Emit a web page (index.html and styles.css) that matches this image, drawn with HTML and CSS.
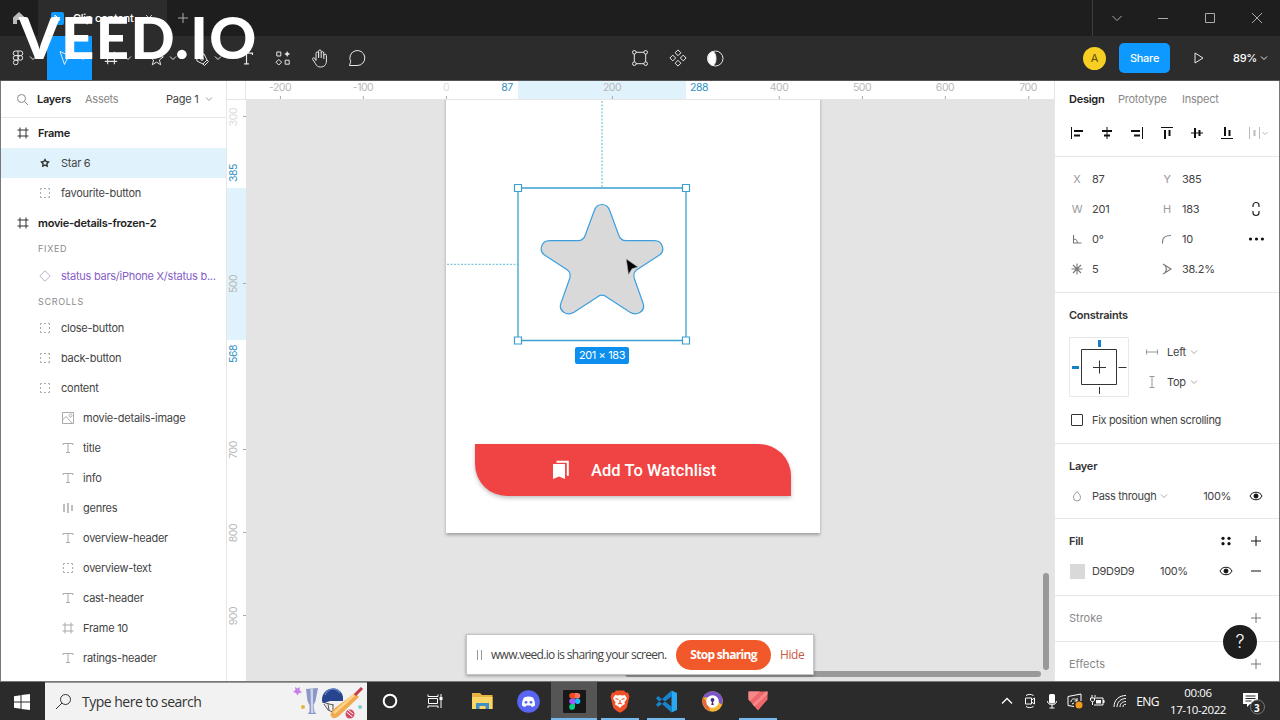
FILE: index.html
```html
<!DOCTYPE html>
<html lang="en">
  <head>
    <meta charset="UTF-8" />
    <meta name="viewport" content="width=device-width, initial-scale=1.0" />
    <title>Clip content</title>
    <link rel="stylesheet" href="styles.css">
  </head>
  <body>
    <!-- shared icons -->
    <svg class="sprite" xmlns="http://www.w3.org/2000/svg">
      <symbol id="chev" viewBox="0 0 8 8"><path d="M1 2.5l3 3 3-3" /></symbol>
      <symbol id="frame" viewBox="0 0 16 16"><path d="M5 2.5v11M11 2.5v11M2.5 5h11M2.5 11h11" /></symbol>
      <symbol id="group" viewBox="0 0 16 16"><path d="M3.500 5V3.500h1.500M7 3.500h2M11 3.500h1.500V5M12.500 7v2M12.500 11v1.500H11M9 12.500H7M5 12.500H3.500V11M3.500 9V7" /></symbol>
      <symbol id="text" viewBox="0 0 16 16"><path d="M3 5V3.500h10V5M8 3.500v9M6 12.500h4" /></symbol>
      <symbol id="plus" viewBox="0 0 16 16"><path d="M8 3v10M3 8h10" /></symbol>
      <symbol id="eye" viewBox="0 0 16 16">
        <path d="M2 8c2-5 10-5 12 0-2 5-10 5-12 0z" /><circle cx="8" cy="8" r="2" fill="currentColor" />
      </symbol>
    </svg>

    <div class="window">
      <div class="titlebar">
        <div class="home"><svg width="14" height="14" viewBox="0 0 14 14"><path d="M7 1L1 6.500V13h4V9h4v4h4V6.500z" fill="#bbb" stroke="none" /></svg></div>
        <div class="tab">
          <svg width="13" height="13" viewBox="0 0 13 13"><rect width="13" height="13" rx="2" fill="#0d99ff" stroke="none" /><path d="M4 10V3l5 5H6z" stroke="#fff" /></svg>
          <span class="tab-name">Clip content</span>
          <svg class="tab-close" width="8" height="8" viewBox="0 0 8 8"><path d="M1 1l6 6M7 1L1 7" /></svg>
        </div>
        <div class="new-tab"><svg width="16" height="16"><use href="#plus" /></svg></div>
        <div class="controls">
          <span><svg width="12" height="12" viewBox="0 0 12 12"><path d="M1.500 4L6 8.500 10.500 4" /></svg></span>
          <span><svg width="12" height="12" viewBox="0 0 12 12"><path d="M1 6.500h10" /></svg></span>
          <span><svg width="12" height="12" viewBox="0 0 12 12"><path d="M1.500 1.500h9v9h-9z" /></svg></span>
          <span><svg width="12" height="12" viewBox="0 0 12 12"><path d="M1 1l10 10M11 1L1 11" /></svg></span>
        </div>
      </div>

      <div class="toolbar">
        <div class="tools">
          <div class="tool tool-menu">
            <svg width="12" height="16" viewBox="0 0 12 16"><path d="M6 1H3.500a2.300 2.300 0 000 4.600H6zM6 1h2.500a2.300 2.300 0 010 4.600H6M6 5.600H3.500a2.300 2.300 0 000 4.600H6zM3.500 10.200A2.300 2.300 0 106 12.500v-2.300z" /><circle cx="8.400" cy="7.900" r="2.300" /></svg>
            <svg class="chev" width="8" height="8"><use href="#chev" /></svg>
          </div>
          <div class="tool active">
            <svg width="17" height="17" viewBox="0 0 17 17"><path d="M2 1.500l12.500 5.500-5.500 2-2.500 5.500z" /></svg>
            <svg class="chev" width="8" height="8"><use href="#chev" /></svg>
          </div>
          <div class="tool">
            <svg width="18" height="18" viewBox="0 0 16 16"><use href="#frame" /></svg>
            <svg class="chev" width="8" height="8"><use href="#chev" /></svg>
          </div>
          <div class="tool">
            <svg width="17" height="17" viewBox="0 0 17 17"><path d="M8.500 2l1.800 4.600 5 .3-3.900 3.100 1.300 4.800-4.200-2.700-4.200 2.700L5.600 10 1.700 6.900l5-.3z" /></svg>
            <svg class="chev" width="8" height="8"><use href="#chev" /></svg>
          </div>
          <div class="tool">
            <svg width="17" height="17" viewBox="0 0 17 17"><path d="M3 3l8 1 3 6-4 4-6-3zM3 3l5 5M14 10l1.500 1.500-4 4L10 14" /><circle cx="9" cy="9" r="1.300" /></svg>
            <svg class="chev" width="8" height="8"><use href="#chev" /></svg>
          </div>
          <div class="tool tool-small"><svg width="19" height="19"><use href="#text" /></svg></div>
          <div class="tool tool-small">
            <svg width="16" height="16" viewBox="0 0 16 16"><path d="M1.800 2h4v4h-4zM10.200 10.200h4v4h-4zM3.800 9.400L6.600 12.200 3.800 15 1 12.200zM12.200 1.500v5M9.700 4h5" /><path d="M12.200 2.500v3M10.700 4h3" stroke-width="2" /></svg>
          </div>
          <div class="tool tool-small">
            <svg width="18" height="19" viewBox="0 0 18 19"><path d="M5 11.500V4.300a1.300 1.300 0 012.600 0V9M7.600 8V2.300a1.300 1.300 0 012.600 0V9M10.200 4a1.300 1.300 0 012.600 0v6M12.800 6.500a1.300 1.300 0 012.600 0V12c0 4-2.500 6-5.700 6-3 0-4-1-5.200-3.300L1.700 10.400c-.7-1.400.9-2.300 1.800-1.200L5 11.500" /></svg>
          </div>
          <div class="tool tool-small">
            <svg width="18" height="18" viewBox="0 0 18 18"><path d="M1.500 16.500l1.200-4A7.500 7.500 0 119 16.500z" /></svg>
          </div>
        </div>
        <div class="tools tools-center">
          <div class="tool"><svg width="18" height="18" viewBox="0 0 18 18"><path d="M5 3.300h8M5 14.700h8M3.300 5v8M14.700 5v8" /><circle cx="3.300" cy="3.300" r="1.800" /><circle cx="14.700" cy="3.300" r="1.800" /><circle cx="3.300" cy="14.700" r="1.800" /><circle cx="14.700" cy="14.700" r="1.800" /></svg></div>
          <div class="tool"><svg width="18" height="18" viewBox="0 0 18 18"><path d="M9 .9l2.900 2.900L9 6.700 6.100 3.800zM9 11.300l2.900 2.900L9 17.100l-2.900-2.900zM3.800 6.100L6.700 9l-2.900 2.900L.9 9zM14.200 6.100L17.100 9l-2.900 2.900L11.300 9z" /></svg></div>
          <div class="tool"><svg width="17" height="17" viewBox="0 0 17 17"><path d="M6 1.300a7.500 7.500 0 000 14.400C10 13.500 10 3.500 6 1.300z" fill="#fff" /><circle cx="8.500" cy="8.500" r="7.500" /></svg></div>
        </div>
        <div class="toolbar-right">
          <div class="avatar">A</div>
          <div class="share">Share</div>
          <svg class="play" width="12" height="14" viewBox="0 0 12 14"><path d="M2 2l8 5-8 5z" /></svg>
          <span class="zoom">89%</span>
          <svg class="chev" width="8" height="8"><use href="#chev" /></svg>
        </div>
      </div>

      <div class="workspace">
        <div class="layers">
          <div class="layers-head">
            <svg width="13" height="13" viewBox="0 0 13 13"><circle cx="5.500" cy="5.500" r="4" /><path d="M8.500 8.500l3.500 3.500" /></svg>
            <b>Layers</b>
            <span class="assets">Assets</span>
            <span class="page">Page 1</span>
            <svg class="chev" width="8" height="8"><use href="#chev" /></svg>
          </div>
          <div class="layer top"><svg width="16" height="16"><use href="#frame" /></svg>Frame</div>
          <div class="layer sub selected"><svg class="dark" width="16" height="16" viewBox="0 0 16 16"><path d="M8 4.500l1.200 2 2.300.4-1.600 1.800.3 2.400L8 10.100l-2.200 1 .3-2.400-1.600-1.800 2.300-.4z" stroke-width="1.400" /></svg>Star 6</div>
          <div class="layer sub"><svg width="16" height="16"><use href="#group" /></svg>favourite-button</div>
          <div class="layer top"><svg width="16" height="16"><use href="#frame" /></svg>movie-details-frozen-2</div>
          <div class="layer-label">FIXED</div>
          <div class="layer sub component"><svg width="16" height="16" viewBox="0 0 16 16"><path d="M8 2.800L13.200 8 8 13.200 2.800 8z" /></svg>status bars/iPhone X/status b...</div>
          <div class="layer-label">SCROLLS</div>
          <div class="layer sub"><svg width="16" height="16"><use href="#group" /></svg>close-button</div>
          <div class="layer sub"><svg width="16" height="16"><use href="#group" /></svg>back-button</div>
          <div class="layer sub"><svg width="16" height="16"><use href="#group" /></svg>content</div>
          <div class="layer deep"><svg width="16" height="16" viewBox="0 0 16 16"><path d="M2.500 2.500h11v11h-11zM2.500 10L6 6.500l6.500 7" /><circle cx="10.500" cy="5.500" r="1.500" /></svg>movie-details-image</div>
          <div class="layer deep"><svg width="16" height="16"><use href="#text" /></svg>title</div>
          <div class="layer deep"><svg width="16" height="16"><use href="#text" /></svg>info</div>
          <div class="layer deep"><svg width="16" height="16" viewBox="0 0 16 16"><path d="M4 4v8M8 3v10M12 5v6" stroke-width="1.500" /></svg>genres</div>
          <div class="layer deep"><svg width="16" height="16"><use href="#text" /></svg>overview-header</div>
          <div class="layer deep"><svg width="16" height="16"><use href="#group" /></svg>overview-text</div>
          <div class="layer deep"><svg width="16" height="16"><use href="#text" /></svg>cast-header</div>
          <div class="layer deep"><svg width="16" height="16"><use href="#frame" /></svg>Frame 10</div>
          <div class="layer deep"><svg width="16" height="16"><use href="#text" /></svg>ratings-header</div>
        </div>

        <!-- positions below are coordinates on the free canvas -->
        <div class="canvas">
          <div class="artboard">
            <div class="watchlist">
              <svg width="18" height="20" viewBox="0 0 18 20"><path d="M1 4h12v15l-6-2.600L1 19z" fill="#fff" /><path d="M4.500 1.700h11.300v14" stroke="#fff" stroke-width="2" fill="none" /></svg>
              <span>Add To Watchlist</span>
            </div>
          </div>
          <svg class="selection" width="827" height="600" viewBox="227 81 827 600">
            <path class="guide" d="M602 101v87M447 264.300h71" />
            <path class="star" d="M594.300 210.500C597 202.500 607 202.500 609.700 210.500L618.500 234.500Q620.500 240.700 626 240.700H654.500C663 240.700 665.300 251 659.500 255L636.500 270Q632.500 273 634.500 279L643 303C646 311 637 316.500 630 312.300L607 297.300Q602 293 597 297.300L574 312.300C567 316.500 558 311 561 303L569.500 279Q571.500 273 567.500 270L544.500 255C538.700 251 541 240.700 549.500 240.700H578Q583.500 240.700 585.500 234.500Z" />
            <path class="box" d="M518 188h168v152.500H518z" />
            <path class="handle" d="M514.500 184.500h7v7h-7zM682.500 184.500h7v7h-7zM514.500 337h7v7h-7zM682.500 337h7v7h-7z" />
            <path class="cursor" d="M626.300 259l11.500 8-5.800 1.700-3.500 5.800z" />
          </svg>
          <div class="size-badge">201 × 183</div>

          <div class="ruler-x">
            <i class="range"></i>
            <span style="left: 53px">-200</span>
            <span style="left: 136px">-100</span>
            <span class="faded" style="left: 219px">0</span>
            <span class="on" style="left: 280px">87</span>
            <span style="left: 385px">200</span>
            <span class="on" style="left: 472px">288</span>
            <span style="left: 552px">400</span>
            <span style="left: 635px">500</span>
            <span style="left: 718px">600</span>
            <span style="left: 801px">700</span>
          </div>
          <div class="ruler-y">
            <i class="range"></i>
            <span class="faded" style="top: 36px">300</span>
            <span class="on" style="top: 92px">385</span>
            <span style="top: 203px">500</span>
            <span class="on" style="top: 273px">568</span>
            <span style="top: 369px">700</span>
            <span style="top: 452px">800</span>
            <span style="top: 535px">900</span>
          </div>
          <div class="corner"></div>
          <div class="scroll-y"></div>
          <div class="scroll-x"></div>
          <div class="sharing">
            <i class="grip"></i>
            <span>www.veed.io is sharing your screen.</span>
            <div class="stop">Stop sharing</div>
            <span class="hide">Hide</span>
          </div>
        </div>

        <div class="props">
          <div class="props-tabs"><b>Design</b><span>Prototype</span><span>Inspect</span></div>
          <div class="align">
            <svg width="16" height="16" viewBox="0 0 16 16"><path d="M2.500 2v12" stroke-width="1" /><path d="M5 6h9M5 10.500h6" /></svg>
            <svg width="16" height="16" viewBox="0 0 16 16"><path d="M8 2v12" stroke-width="1" /><path d="M3 6h10M5 10.500h6" /></svg>
            <svg width="16" height="16" viewBox="0 0 16 16"><path d="M13.500 2v12" stroke-width="1" /><path d="M2 6h9M5 10.500h6" /></svg>
            <svg width="16" height="16" viewBox="0 0 16 16"><path d="M2 2.500h12" stroke-width="1" /><path d="M6 5v9M10.500 5v6" /></svg>
            <svg width="16" height="16" viewBox="0 0 16 16"><path d="M2 8h12" stroke-width="1" /><path d="M6 3v10M10.500 5v6" /></svg>
            <svg width="16" height="16" viewBox="0 0 16 16"><path d="M2 13.500h12" stroke-width="1" /><path d="M6 2v9M10.500 5v6" /></svg>
            <svg class="tidy" width="20" height="16" viewBox="0 0 20 16"><path d="M1.500 2v12M11.500 2v12M14.500 7l2.500 2.500L19.500 7" stroke-width="1" /><path d="M6.500 5v6" /></svg>
          </div>

          <div class="section">
            <div class="fields">
              <i>X</i><span>87</span><i>Y</i><span>385</span><i class="act"></i>
              <i>W</i><span>201</span><i>H</i><span>183</span>
              <i class="act"><svg width="16" height="16" viewBox="0 0 16 16"><path d="M5 6V4.500a3 3 0 016 0V6M5 10v1.500a3 3 0 006 0V10" stroke-width="1.200" /></svg></i>
              <i><svg width="14" height="14" viewBox="0 0 14 14"><path d="M3.500 3v8h8M3.500 7c2 0 4 1.500 4 4" /></svg></i><span>0°</span>
              <i><svg width="14" height="14" viewBox="0 0 14 14"><path d="M2.500 11.500V10C2.500 5.500 5 3.500 11 3.500" /></svg></i><span>10</span>
              <i class="act"><svg class="dots" width="16" height="16" viewBox="0 0 16 16"><circle cx="2.500" cy="8" r="1.600" /><circle cx="8.500" cy="8" r="1.600" /><circle cx="14.400" cy="8" r="1.600" /></svg></i>
              <i><svg width="14" height="14" viewBox="0 0 14 14"><path d="M7 1.500v11M1.500 7h11M3 3l8 8M11 3l-8 8" /></svg></i><span>5</span>
              <i><svg width="14" height="14" viewBox="0 0 14 14"><path d="M3 2l8 5-8 5M5 3.500c1.500 2 1.500 5 0 7" /></svg></i><span>38.2%</span>
            </div>
          </div>

          <div class="section">
            <div class="section-title">Constraints</div>
            <div class="constraints">
              <svg class="pin-box" width="60" height="60" viewBox="0 0 60 60">
                <path d="M.5.500h59v59H.500z" stroke="#e8e8e8" />
                <path d="M12.500 12.500h35v35h-35zM30.500 23.500v13M24 30.500h13M49.500 30.500h8M30.500 50v7" stroke="#333" />
                <path d="M30.500 3v7M3 30.500h7" stroke="#1681c9" stroke-width="3" />
              </svg>
              <div class="pins">
                <div class="pin"><svg width="14" height="14" viewBox="0 0 14 14"><path d="M1.500 4.500v5M12.500 4.500v5M1.500 7h11" /></svg>Left<svg class="chev" width="8" height="8"><use href="#chev" /></svg></div>
                <div class="pin"><svg width="14" height="14" viewBox="0 0 14 14"><path d="M4.500 1.500h5M4.500 12.500h5M7 1.500v11" /></svg>Top<svg class="chev" width="8" height="8"><use href="#chev" /></svg></div>
              </div>
            </div>
            <div class="row"><i><em class="checkbox"></em></i>Fix position when scrolling</div>
          </div>

          <div class="section section-layer">
            <div class="section-title">Layer</div>
            <div class="row">
              <i><svg width="14" height="14" viewBox="0 0 14 14"><path d="M7 2.500C5.500 4.500 3.500 6 3.500 8.500a3.500 3.500 0 007 0C10.500 6 8.500 4.500 7 2.500z" /></svg></i>
              Pass through<svg class="chev" width="8" height="8"><use href="#chev" /></svg>
              <span class="opacity">100%</span>
              <i class="act"><svg width="16" height="16"><use href="#eye" /></svg></i>
            </div>
          </div>

          <div class="section section-fill">
            <div class="section-title">Fill
              <i class="act styles"><svg class="dots" width="16" height="16" viewBox="0 0 16 16"><circle cx="5" cy="5.300" r="1.600" /><circle cx="11" cy="5.300" r="1.600" /><circle cx="5" cy="10.700" r="1.600" /><circle cx="11" cy="10.700" r="1.600" /></svg></i>
              <i class="act"><svg width="16" height="16"><use href="#plus" /></svg></i>
            </div>
            <div class="row">
              <i><em class="swatch"></em></i><span class="hex">D9D9D9</span>100%
              <i class="act styles"><svg width="16" height="16"><use href="#eye" /></svg></i>
              <i class="act"><svg width="16" height="16" viewBox="0 0 16 16"><path d="M3 8h10" /></svg></i>
            </div>
          </div>

          <div class="section empty">
            <div class="section-title">Stroke<i class="act"><svg width="16" height="16"><use href="#plus" /></svg></i></div>
          </div>
          <div class="section empty">
            <div class="section-title">Effects<i class="act"><svg width="16" height="16"><use href="#plus" /></svg></i></div>
          </div>
          <div class="help">?</div>
        </div>
      </div>
    </div>

    <div class="taskbar">
      <div class="start"><svg width="16" height="16" viewBox="0 0 16 16"><path d="M0 2.300l6.500-1v6.300H0zM7.500 1.100L16 0v7.600H7.500zM0 8.500h6.500v6.300l-6.500-1zM7.500 8.500H16V16l-8.500-1.100z" fill="#fff" stroke="none" /></svg></div>
      <div class="search">
        <svg width="17" height="17" viewBox="0 0 17 17"><circle cx="10.500" cy="6.500" r="5" /><path d="M7 10l-6 6" /></svg>
        <span>Type here to search</span>
        <svg class="cricket" width="74" height="36" viewBox="0 0 74 36">
          <path d="M4 3l2.500 1.500L9 3 8.500 6 11 8.500 8 9 6.500 11.500 5 9 2 8l2.500-2z" fill="#c77fe8" />
          <circle cx="12" cy="23" r="2" fill="#e4b53a" />
          <path d="M15 5l12-1-2.500 13-2 4 1 7 2 2h-9l2-2v-7l-2-4z" fill="#8d97c5" /><path d="M19.500 5h2.500v16l.5 8h-2.500z" fill="#cdd4ee" />
          <path d="M33 20l4 6 7 3M31 18l11 3M37 20l1 6M42 20v7" stroke="#555" fill="none" />
          <path d="M31 17C30 2 50 0 52 13v4l-13 0-6 2z" fill="#27458f" /><path d="M34 11c3-7 11-8 15-2" stroke="#5b7fc7" stroke-width="1.500" fill="none" />
          <path d="M64 9l4 4-19 18c-4 4-8 4-9 1-1-2 0-4 4-8z" fill="#f0aa4f" /><path d="M63 11L43 29" stroke="#ffd48a" stroke-width="2.500" />
          <path d="M64 11l7-7" stroke="#c63b49" stroke-width="3" />
          <circle cx="59" cy="30" r="4.500" fill="#d34a62" /><path d="M55.500 28l6 5M57 26l5 4" stroke="#fff" />
          <circle cx="69" cy="23" r="2" fill="#7fd0cf" />
        </svg>
      </div>
      <div class="task narrow"><svg width="16" height="16" viewBox="0 0 16 16"><circle cx="8" cy="8" r="6.300" stroke="#fff" stroke-width="2" /></svg></div>
      <div class="task narrow"><svg width="16" height="16" viewBox="0 0 16 16"><path d="M1 1.500v2h10v-2M1 15v-2h10v2M1.500 5.500h9v5h-9zM14 1v14" /><path d="M14 4v3" stroke-width="3" /></svg></div>
      <div class="task first"><svg width="21" height="18" viewBox="0 0 21 18"><path d="M0 1h8l2 2h10.500v14H0z" fill="#e9b441" /><path d="M0 5h20.500v12H0z" fill="#fbd566" /><path d="M4 17v-6h13v6h-3.500v-3h-6v3z" fill="#3c8fc7" /></svg></div>
      <div class="task"><svg width="23" height="23" viewBox="0 0 23 23"><circle cx="11.500" cy="11.500" r="11.300" fill="#5865f2" /><path d="M7 7.500c3-1.200 6-1.200 9 0 1.500 2.500 2.200 5 2 8-1 .9-2 1.300-3.300 1.500l-.8-1.500h-4.800L8.300 17C7 16.800 6 16.400 5 15.500c-.2-3 .5-5.500 2-8z" fill="#fff" /><circle cx="9" cy="12.300" r="1.400" fill="#5865f2" /><circle cx="14" cy="12.300" r="1.400" fill="#5865f2" /></svg></div>
      <div class="task current open"><svg width="23" height="23" viewBox="0 0 23 23"><rect width="23" height="23" rx="1" fill="#181818" /><path d="M12 3H9a2.700 2.700 0 000 5.500h3z" fill="#f24e1e" /><path d="M12 3h2.500a2.700 2.700 0 010 5.500H12z" fill="#ff7262" /><path d="M12 8.500H9A2.700 2.700 0 009 14h3z" fill="#a259ff" /><circle cx="14.600" cy="11.300" r="2.700" fill="#1abcfe" /><path d="M12 14H9a2.900 2.900 0 103 3z" fill="#0acf83" /></svg></div>
      <div class="task open short">
        <svg width="20" height="23" viewBox="0 0 20 23"><path d="M6 .5h8l2 2.200 2-.2 1.500 4-.8 3L17 17c-.8 2.200-3.500 4-7 5.700C6.500 21 3.800 19.200 3 17L1.300 9.500l-.8-3L2 2.500l2 .2z" fill="#f0502a" /><path d="M5 5l3 .6L10 5l2 .6 3-.6 2 3.500-2.600 3.700.6 1.800-2.700 1.500L10 18l-2.300-1.900L5 14.600l.6-2.400L3 8.500z" fill="#fff" /><path d="M5.500 8.500l3 1M14.500 8.500l-3 1M10 10v3M8 14l2-.8 2 .8" stroke="#f0502a" stroke-width="1.200" fill="none" /></svg>
      </div>
      <div class="task open short"><svg width="23" height="23" viewBox="0 0 23 23"><path d="M16.500.500L22 3v17l-5.500 2.500z" fill="#29a9f0" /><path d="M16.500.500L1 14.500 3 17 17 6zM16.500 22.500L1 8.500 3 6l14 11z" fill="#1683cd" /></svg></div>
      <div class="task"><svg width="21" height="21" viewBox="0 0 21 21"><circle cx="10.500" cy="10.500" r="10.300" fill="#f6b637" /><path d="M1 6.500C4 0 13-2 18 3.500c3 3 3 7 1.500 10L10 6z" fill="#7a56c9" /><path d="M1 6.500c-2 6 2 12 7 13.500l-2-8z" fill="#e8683a" /><circle cx="10.500" cy="10.500" r="6.300" fill="#fff" /><circle cx="10.500" cy="9" r="1.900" fill="#42307d" /><path d="M10.500 9l1.300 5H9.200z" fill="#42307d" /></svg></div>
      <div class="task open short"><svg width="20" height="20" viewBox="0 0 20 20"><path d="M.5.500h19v8L10 19.500.500 8.500z" fill="#f0666a" /><path d="M.5.500H12L2 10 .5 8.500zM19.500.500v3L6.500 15.500l-2-2.300L18 .5z" fill="#f58a8a" /></svg></div>

      <div class="tray">
        <span><svg width="12" height="12" viewBox="0 0 12 12"><path d="M1 8.500l5-5 5 5" stroke-width="1.300" /></svg></span>
        <span><svg width="14" height="16" viewBox="0 0 14 16"><path d="M2.500 5h6v6h-6zM8.500 7l3-2v6l-3-2M3 2.500c2.500-1.500 5-1.500 7.500 0M3 13.500c2.500 1.500 5 1.500 7.500 0" /></svg></span>
        <span><svg width="12" height="16" viewBox="0 0 12 16"><rect x="3" y="1" width="6" height="9.500" rx="1.500" fill="#fff" stroke="none" /><path d="M1.500 8c0 5 9 5 9 0M6 12v3M3.500 15h5" /></svg></span>
        <span><svg width="18" height="18" viewBox="0 0 18 18"><path d="M8 14.500l-6-1v-9l13-2.500v7M5 10c0-4 5-4 6-1M11 6v3H8.500M6 12l2-1" /><circle cx="13" cy="13" r="3.500" fill="#f29b1c" stroke="none" /></svg></span>
        <span><svg width="16" height="14" viewBox="0 0 16 14"><path d="M5.500 4h8.500v7H5M3 1v3M6 1v2M1.500 4h4v2c0 2-4 2-4 0zM3.500 8v3" /><path d="M7 6h5v3.500H7zM14 6h1.500v3H14z" fill="#fff" stroke="none" /></svg></span>
        <span><svg width="14" height="14" viewBox="0 0 14 14"><path d="M1 13C1 6 6 1.500 13 1.500M4 13c0-5 4-8.500 9-8.500M7 13c0-3.500 2.500-5.500 6-5.500M10 13c0-2 1-2.700 3-2.700" /></svg></span>
        <span>ENG</span>
        <span class="clock">00:06<br>17-10-2022</span>
        <span class="notify">
          <svg width="24" height="24" viewBox="0 0 24 24"><path d="M1 2h15v11H8l-3 3v-3H1z" fill="#fff" stroke="none" /><path d="M3.500 5h10M3.500 7.500h10M3.500 10h6" stroke="#2b2b2b" /><circle cx="15.500" cy="16" r="7" fill="#2b2b2b" stroke="#777" /></svg>
          <b>3</b>
        </span>
      </div>
    </div>

    <div class="watermark">VEED.IO</div>
  </body>
</html>
```
FILE: styles.css
```css
* {
  padding: 0;
  margin: 0;
  box-sizing: border-box;
}
body {
  width: 1280px;
  height: 720px;
  overflow: hidden;
  position: relative;
  display: flex;
  flex-direction: column;
  font-family: Inter, sans-serif;
  font-size: 11px;
  letter-spacing: -0.25px;
  color: #444;
  background: #2b2b2b;
}
i,
em {
  font-style: normal;
}
svg {
  flex: none;
  display: block;
  fill: none;
  stroke: currentColor;
}
.sprite {
  position: absolute;
  width: 0;
  height: 0;
}
.dots {
  fill: #111;
  stroke: none;
}
.window {
  height: 682px;
  display: flex;
  flex-direction: column;
}

/* title bar */
.titlebar {
  height: 36px;
  display: flex;
  align-items: center;
  background: #1e1e1e;
  color: #aaa;
}
.home {
  width: 38px;
  padding-left: 12px;
}
.tab {
  width: 129px;
  height: 36px;
  padding-left: 13px;
  display: flex;
  align-items: center;
  background: #2c2c2c;
  color: #fff;
}
.tab-name {
  width: 68px;
  margin-left: 9px;
  font-weight: 500;
  white-space: nowrap;
}
.tab-close {
  margin-left: 4px;
  color: #ccc;
}
.new-tab {
  margin-left: 8px;
}
.controls {
  height: 36px;
  margin-left: auto;
  display: flex;
  border-left: 1px solid #3c3c3c;
}
.controls span {
  width: 46.700px;
  display: flex;
  align-items: center;
  justify-content: center;
}

/* toolbar */
.toolbar {
  height: 45px;
  display: grid;
  grid-template-columns: 1fr auto 1fr;
  background: #2c2c2c;
  border-bottom: 1px solid #555;
  color: #e8e8e8;
}
.tools {
  display: flex;
}
.tool {
  width: 45.250px;
  padding-left: 6px;
  display: flex;
  align-items: center;
  justify-content: center;
  gap: 4px;
}
.tool-menu {
  width: 46.500px;
  padding-left: 3px;
  gap: 5px;
}
.tool.active {
  background: #0d99ff;
}
.tool-small {
  width: 37px;
  padding-left: 0;
}
.tools-center {
  margin-left: 75px;
}
.tools-center .tool {
  width: 37.500px;
  padding-left: 0;
}
.toolbar-right {
  display: flex;
  align-items: center;
  justify-content: flex-end;
  padding-right: 12px;
}
.avatar {
  width: 23px;
  height: 23px;
  line-height: 23px;
  border-radius: 50%;
  background: #f7cf24;
  color: #5c4a00;
  text-align: center;
}
.share {
  width: 51px;
  height: 30px;
  line-height: 30px;
  margin: 0 23px 0 13px;
  border-radius: 5px;
  background: #0d99ff;
  color: #fff;
  font-weight: 500;
  text-align: center;
}
.play {
  margin-right: 28px;
}
.zoom {
  width: 27px;
  color: #fff;
  font-weight: 500;
}

/* layers panel */
.workspace {
  height: 601px;
  display: flex;
  background: #fff;
  border-left: 1px solid #777;
  border-right: 1px solid #777;
  border-bottom: 1px solid #777;
}
.layers {
  width: 226px;
  border-right: 1px solid #e6e6e6;
}
.layers-head {
  height: 37px;
  padding-left: 15px;
  display: flex;
  align-items: center;
  border-bottom: 1px solid #e6e6e6;
  color: #888;
}
.layers-head b {
  width: 48px;
  margin-left: 8px;
  color: #222;
  font-weight: 600;
}
.assets {
  width: 81px;
}
.page {
  width: 35px;
  color: #444;
  white-space: nowrap;
}
.layers-head .chev {
  color: #999;
}
.layer {
  height: 30px;
  display: flex;
  align-items: center;
  gap: 8px;
  white-space: nowrap;
}
.layer svg {
  color: #aaa;
}
.layer.top {
  padding-left: 14px;
  gap: 7px;
  color: #222;
  font-weight: 600;
}
.layer.top svg,
.layer svg.dark {
  color: #333;
}
.layer.sub {
  padding-left: 36px;
}
.layer.deep {
  padding-left: 59px;
  gap: 7px;
}
.layer.selected {
  background: #e0f2fb;
}
.layer.component {
  color: #8660c8;
}
.layer.component svg {
  color: #b8b2c8;
}
.layer-label {
  height: 22.500px;
  line-height: 22.500px;
  padding-left: 37px;
  color: #8a8a8a;
  font-size: 9px;
  letter-spacing: 0.7px;
}

/* canvas */
.canvas {
  width: 827px;
  height: 600px;
  position: relative;
  overflow: hidden;
  background: #e4e4e4;
}
.artboard {
  position: absolute;
  left: 219px;
  top: 0;
  width: 373.500px;
  height: 452px;
  padding: 363px 0 0 29px;
  background: #fff;
  box-shadow: 0 2px 3px rgba(0, 0, 0, 0.3);
}
.watchlist {
  width: 316px;
  height: 52px;
  padding-left: 77px;
  display: flex;
  align-items: center;
  gap: 21px;
  background: #f04444;
  border-radius: 0 32px 0 32px;
  box-shadow: 0 2px 4px rgba(0, 0, 0, 0.25);
  color: #fff;
  font-family: Roboto, sans-serif;
  font-size: 16.500px;
  font-weight: 500;
  letter-spacing: 0.05px;
}
.watchlist svg {
  stroke: none;
}
.selection {
  position: absolute;
  left: 0;
  top: 0;
}
.guide {
  stroke: #5fb9d3;
  stroke-dasharray: 2 1.500;
}
.star {
  fill: #d9d9d9;
  stroke: #3d9fe0;
  stroke-width: 1.200;
}
.box {
  stroke: #3d9fd0;
  stroke-width: 1.300;
}
.handle {
  fill: #fff;
  stroke: #3d9fd0;
  stroke-width: 1.200;
}
.cursor {
  fill: #000;
  stroke: #aaa;
  stroke-width: 0.6;
}
.size-badge {
  position: absolute;
  left: 348px;
  top: 266px;
  width: 54px;
  height: 17px;
  line-height: 17px;
  border-radius: 2px;
  background: #0d8fee;
  color: #fff;
  letter-spacing: -0.4px;
  text-align: center;
}
.ruler-x,
.ruler-y {
  position: absolute;
  left: 0;
  top: 0;
  background: #fff;
  color: #b8b8b8;
  font-size: 10.500px;
  letter-spacing: -0.5px;
}
.ruler-x {
  width: 827px;
  height: 19px;
  border-bottom: 1px solid #e6e6e6;
}
.ruler-y {
  width: 19px;
  height: 600px;
}
.ruler-x span {
  position: absolute;
  top: 0;
  height: 18px;
  line-height: 14px;
  transform: translateX(-50%);
}
.ruler-x span:not(.on)::after {
  content: '';
  position: absolute;
  left: 50%;
  bottom: 0;
  width: 1px;
  height: 3px;
  background: #aaa;
}
.ruler-y span {
  position: absolute;
  left: -3px;
  width: 20px;
  height: 14px;
  line-height: 14px;
  margin-top: -7px;
  text-align: center;
  transform: rotate(-90deg);
}
.ruler-y span:not(.on)::after {
  content: '';
  position: absolute;
  left: 50%;
  bottom: -5px;
  width: 1px;
  height: 3px;
  background: #aaa;
}
.canvas .on {
  color: #2f8fc4;
}
.canvas .faded {
  color: #dcdcdc;
}
.range {
  position: absolute;
  background: #e0f2fb;
}
.ruler-x .range {
  left: 291px;
  width: 168px;
  height: 18px;
}
.ruler-y .range {
  top: 107px;
  width: 19px;
  height: 152px;
}
.corner {
  position: absolute;
  left: 0;
  top: 0;
  width: 19px;
  height: 19px;
  background: #fff;
  border-right: 1px solid #e6e6e6;
  border-bottom: 1px solid #e6e6e6;
}
.scroll-y,
.scroll-x {
  position: absolute;
  border-radius: 3px;
  background: #999;
}
.scroll-y {
  left: 816px;
  top: 492px;
  width: 6px;
  height: 97px;
}
.scroll-x {
  left: 398px;
  top: 590px;
  width: 416px;
  height: 6px;
}
.sharing {
  position: absolute;
  left: 239px;
  top: 553px;
  width: 348px;
  height: 41px;
  padding-left: 10px;
  display: flex;
  align-items: center;
  background: #fff;
  border: 1px solid #c4c4c4;
  box-shadow: 0 1px 3px rgba(0, 0, 0, 0.35);
  color: #444;
  font-family: 'Open Sans', sans-serif;
  font-size: 12px;
  letter-spacing: -0.7px;
  white-space: nowrap;
}
.sharing span {
  width: 185px;
  flex: none;
}
.grip {
  width: 5px;
  height: 10px;
  margin-right: 9px;
  border-left: 1px solid #999;
  border-right: 1px solid #999;
}
.stop {
  width: 95px;
  height: 30px;
  line-height: 30px;
  border-radius: 15px;
  background: #f1592a;
  color: #fff;
  font-weight: 700;
  text-align: center;
}
.sharing .hide {
  width: auto;
  margin-left: 9px;
  color: #c9593f;
  letter-spacing: -0.4px;
}

/* properties panel */
.props {
  position: relative;
  flex: 1;
  border-left: 1px solid #e6e6e6;
}
.props b {
  font-weight: 600;
  color: #222;
}
.props-tabs {
  height: 36px;
  padding-left: 14px;
  display: flex;
  align-items: center;
  color: #888;
}
.props-tabs b {
  width: 49px;
}
.props-tabs span:nth-of-type(1) {
  width: 64px;
}
.align {
  height: 39px;
  padding: 8px 0 0 14px;
  display: flex;
  gap: 14px;
  color: #111;
  stroke-width: 2;
}
.align .tidy {
  margin-left: -1px;
  color: #bbb;
}
.section {
  padding: 7px 0 8px 14px;
  border-top: 1px solid #e6e6e6;
}
.section-layer {
  padding-bottom: 7px;
}
.section-fill {
  padding-bottom: 9px;
}
.fields {
  display: grid;
  grid-template-columns: 23px 67px 23px 62px 24px;
  grid-auto-rows: 30px;
  align-items: center;
}
.fields i,
.row > i:first-child {
  width: 16px;
  display: flex;
  justify-content: center;
  color: #999;
}
.fields .act,
.row .act,
.section-title .act {
  width: 24px;
  display: flex;
  justify-content: center;
  color: #111;
}
.fields svg {
  stroke-width: 1.100;
  color: #777;
}
.fields .act svg {
  color: #222;
}
.section-title {
  height: 30px;
  padding-right: 11px;
  display: flex;
  align-items: center;
  justify-content: space-between;
  color: #333;
  font-weight: 600;
}
.section-title .styles,
.row .styles {
  margin-left: auto;
  margin-right: 6px;
}
.empty .section-title {
  color: #888;
  font-weight: 400;
  letter-spacing: 0;
}
.empty .act {
  color: #777;
}
.row {
  height: 30px;
  padding-right: 11px;
  display: flex;
  align-items: center;
  letter-spacing: -0.33px;
  white-space: nowrap;
}
.row > i:first-child {
  margin-right: 7px;
}
.chev {
  margin-left: 4px;
}
.props .chev {
  color: #aaa;
}
.tool .chev,
.toolbar-right .chev {
  margin-left: 0;
}
.opacity {
  margin-left: auto;
  margin-right: 13px;
}
.constraints {
  height: 75px;
  padding-top: 7px;
  display: flex;
  gap: 16px;
}
.pin {
  height: 30px;
  display: flex;
  align-items: center;
}
.pin svg:first-child {
  margin-right: 8px;
  color: #999;
}
.checkbox {
  width: 12px;
  height: 12px;
  border: 1px solid #333;
  border-radius: 1px;
}
.swatch {
  width: 15px;
  height: 15px;
  background: #d9d9d9;
}
.hex {
  width: 68px;
}
.help {
  position: absolute;
  right: 22px;
  bottom: 22px;
  width: 34px;
  height: 34px;
  line-height: 34px;
  border-radius: 50%;
  background: #1e1e1e;
  color: #fff;
  font-size: 18px;
  font-weight: 300;
  text-align: center;
}

/* taskbar */
.taskbar {
  height: 38px;
  display: flex;
  background: #2b2b2b;
  color: #fff;
  font-family: 'Open Sans', sans-serif;
  font-size: 12px;
}
.start {
  width: 45px;
  padding: 12px 0 0 14px;
}
.search {
  width: 322px;
  padding-left: 10px;
  display: flex;
  align-items: center;
  gap: 10px;
  background: #f2f2f2;
  border-top: 1px solid #999;
  color: #333;
  font-size: 14px;
  letter-spacing: -0.5px;
}
.cricket {
  margin-left: auto;
  margin-right: 2px;
  stroke: none;
}
.task {
  position: relative;
  width: 46px;
  display: flex;
  align-items: center;
  justify-content: center;
}
.task.narrow {
  width: 45px;
}
.task.first {
  margin-left: 2px;
}
.task:not(.narrow) svg {
  stroke: none;
}
.task.current {
  background: #555;
}
.task.open::after {
  content: '';
  position: absolute;
  left: 0;
  right: 0;
  bottom: 0;
  height: 2px;
  background: #76b9ed;
}
.task.short::after {
  left: 4px;
  right: 4px;
}
.tray {
  margin-left: auto;
  width: 284px;
  display: grid;
  grid-template-columns: 22px 23px 22px 23px 22px 24px 31px 70px 41px;
  letter-spacing: -0.7px;
}
.tray span {
  display: flex;
  align-items: center;
  justify-content: center;
}
.tray .clock {
  display: block;
  padding-top: 2px;
  font-size: 11.500px;
  line-height: 17px;
  letter-spacing: -0.4px;
  text-align: center;
}
.tray .notify {
  position: relative;
  padding-top: 4px;
}
.notify b {
  position: absolute;
  left: 21px;
  top: 18px;
  font-size: 10px;
  line-height: 16px;
}

/* recording overlay */
.watermark {
  position: absolute;
  left: 19px;
  top: 3px;
  color: #fff;
  font-family: Lato, sans-serif;
  font-size: 58px;
  font-weight: 900;
  line-height: 67px;
  letter-spacing: 1.400px;
}
```
